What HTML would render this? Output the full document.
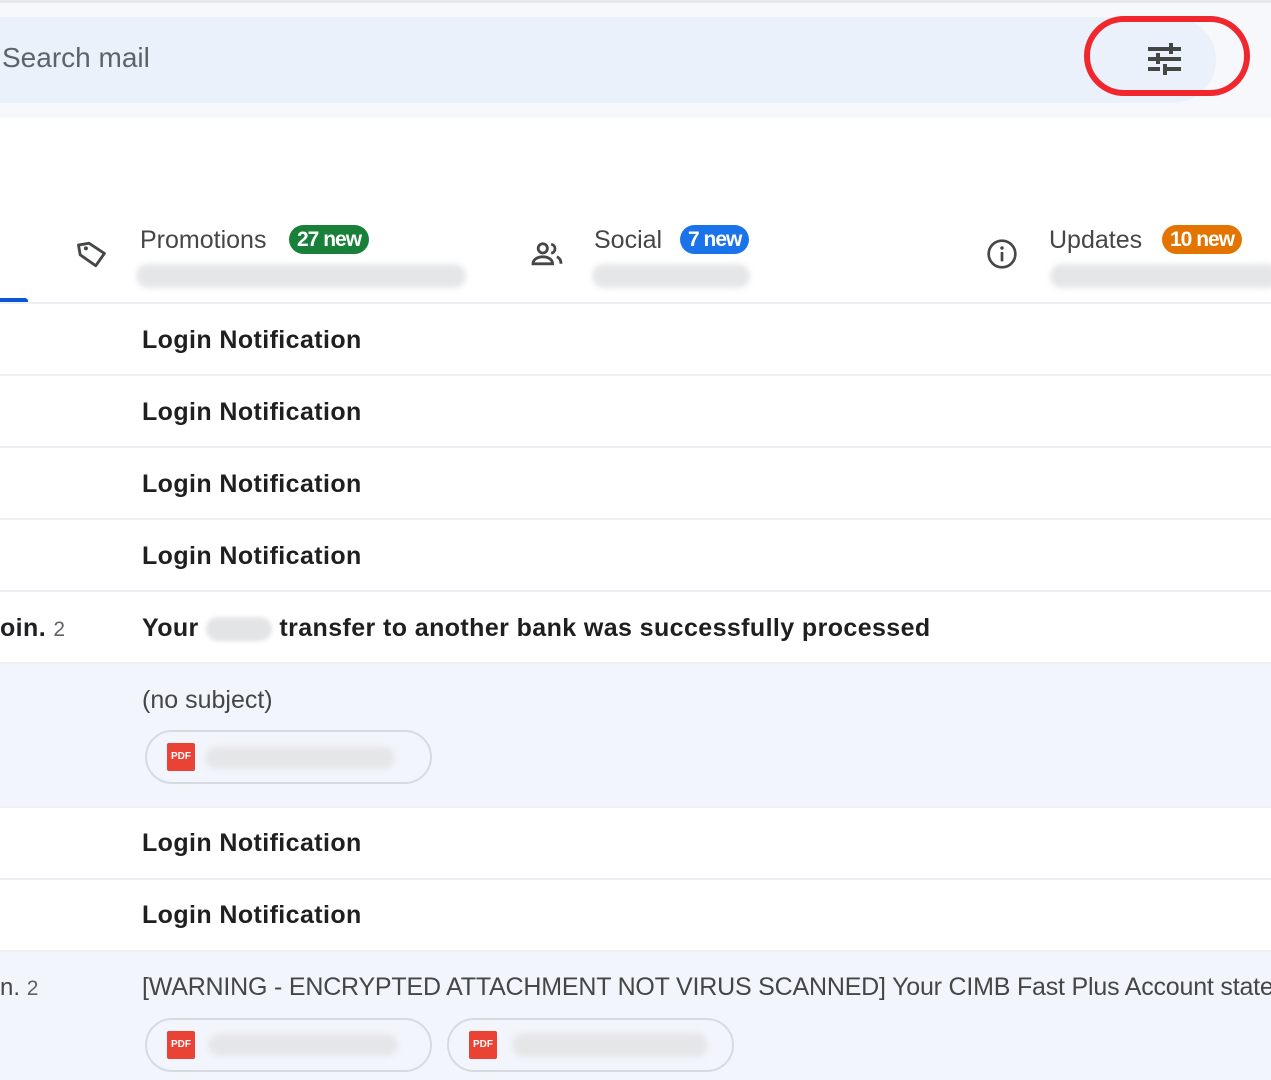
<!DOCTYPE html>
<html><head><meta charset="utf-8"><style>
*{margin:0;padding:0;box-sizing:border-box}
body{width:1271px;height:1080px;overflow:hidden;background:#fff;font-family:"Liberation Sans",Arial,sans-serif;color:#202124;position:relative}
.abs{position:absolute}
.top{left:0;top:0;width:1271px;height:118px;background:#f6f8fc;border-top:3px solid #e6e8ec}
.search{left:0;top:17px;width:1216px;height:86px;background:#eaf1fb;border-radius:0 43px 43px 0}
.stxt{left:2px;top:42px;font-size:28px;color:#5f6368}
.ring{left:1084px;top:16px;width:166px;height:80px;border:6px solid #f0282d;border-radius:40px}
.tab{font-size:25px;color:#444746;top:226px}
.badge{top:225px;height:29px;border-radius:15px;color:#fff;font-size:21px;font-weight:bold;padding:0 8px;line-height:29px;letter-spacing:-1px}
.blur{background:#e5e6e8;border-radius:12px;filter:blur(3px)}
.line{left:0;width:1271px;height:2px;background:#eceff3}
.subj{left:142px;font-size:25px;font-weight:bold;color:#1f1f1f;letter-spacing:0.4px}
.chip{height:54px;border:2px solid #d6dbe1;border-radius:27px;background:transparent}
.pdf{width:28px;height:28px;background:#ea4335;border-radius:2px;color:#fff;font-size:10px;font-weight:bold;text-align:center;line-height:28px}
</style></head><body>
<div class="abs top"></div>
<div class="abs search"></div>
<div class="abs stxt">Search mail</div>
<svg class="abs" style="left:1147px;top:42px" width="36" height="34" viewBox="0 0 36 34"><g fill="#444746"><rect x="1" y="5" width="21" height="4"/><rect x="25" y="5" width="9" height="4"/><rect x="22" y="1" width="4" height="11"/><rect x="1" y="15" width="8" height="4"/><rect x="13" y="15" width="21" height="4"/><rect x="9" y="11" width="4" height="11"/><rect x="1" y="25" width="12" height="4"/><rect x="20" y="25" width="14" height="4"/><rect x="16" y="22" width="4" height="11"/></g></svg>
<div class="abs ring"></div>

<svg class="abs" style="left:76px;top:237px" width="34" height="34" viewBox="0 0 24 24"><path d="M3 4v7l9.5 9.5 7.5-7.5L10.5 4z" fill="none" stroke="#444746" stroke-width="2" stroke-linejoin="round" transform="rotate(-10 12 12)"/><circle cx="7" cy="8" r="1.4" fill="#444746"/></svg>
<div class="abs tab" style="left:140px">Promotions</div>
<div class="abs badge" style="left:289px;background:#188038">27 new</div>
<div class="abs blur" style="left:136px;top:264px;width:330px;height:24px"></div>

<svg class="abs" style="left:530px;top:240px" width="34" height="28" viewBox="0 0 24 20"><g fill="none" stroke="#444746" stroke-width="2"><circle cx="9" cy="6" r="3.3"/><path d="M2 17c0-3 3-5 7-5s7 2 7 5z"/><path d="M15 3a3.3 3.3 0 0 1 0 6.5M19 12c2 .7 3 2.5 3 5"/></g></svg>
<div class="abs tab" style="left:594px">Social</div>
<div class="abs badge" style="left:680px;background:#1a73e8">7 new</div>
<div class="abs blur" style="left:592px;top:264px;width:158px;height:24px"></div>

<svg class="abs" style="left:986px;top:238px" width="32" height="32" viewBox="0 0 24 24"><circle cx="12" cy="12" r="10" fill="none" stroke="#444746" stroke-width="2"/><rect x="11" y="10.5" width="2" height="7" fill="#444746"/><circle cx="12" cy="7.5" r="1.3" fill="#444746"/></svg>
<div class="abs tab" style="left:1049px">Updates</div>
<div class="abs badge" style="left:1162px;background:#e37400">10 new</div>
<div class="abs blur" style="left:1050px;top:264px;width:230px;height:24px"></div>

<div class="abs" style="left:0;top:298px;width:28px;height:5px;background:#0b57d0;border-radius:0 3px 0 0"></div>
<div class="abs line" style="top:302px"></div>

<div class="abs subj" style="top:326px">Login Notification</div>
<div class="abs line" style="top:374px"></div>
<div class="abs subj" style="top:398px">Login Notification</div>
<div class="abs line" style="top:446px"></div>
<div class="abs subj" style="top:470px">Login Notification</div>
<div class="abs line" style="top:518px"></div>
<div class="abs subj" style="top:542px">Login Notification</div>
<div class="abs line" style="top:590px"></div>
<div class="abs" style="left:0;top:614px;font-size:25px;font-weight:bold;letter-spacing:0.4px">oin. <span style="font-weight:normal;font-size:21px;color:#5f6368">2</span></div>
<div class="abs subj" style="top:614px">Your <span style="display:inline-block;width:66px;height:24px;background:#e3e4e6;border-radius:12px;vertical-align:middle;filter:blur(2px)"></span> transfer to another bank was successfully processed</div>
<div class="abs" style="left:0;top:662px;width:1271px;height:145px;background:#f2f6fc"></div>
<div class="abs line" style="top:662px"></div>
<div class="abs" style="left:142px;top:686px;font-size:25px;color:#444746">(no subject)</div>
<div class="abs chip" style="left:145px;top:730px;width:287px"></div>
<div class="abs pdf" style="left:167px;top:743px">PDF</div>
<div class="abs blur" style="left:205px;top:747px;width:190px;height:22px"></div>
<div class="abs line" style="top:806px"></div>
<div class="abs subj" style="top:829px">Login Notification</div>
<div class="abs line" style="top:878px"></div>
<div class="abs subj" style="top:901px">Login Notification</div>
<div class="abs" style="left:0;top:950px;width:1271px;height:130px;background:#f2f6fc"></div>
<div class="abs line" style="top:950px"></div>
<div class="abs" style="left:0;top:974px;font-size:24px;color:#444746">n. <span style="font-size:21px;color:#5f6368">2</span></div>
<div class="abs" style="left:142px;top:973px;font-size:25px;color:#444746;white-space:nowrap;letter-spacing:-0.2px">[WARNING - ENCRYPTED ATTACHMENT NOT VIRUS SCANNED] Your CIMB Fast Plus Account statement</div>
<div class="abs chip" style="left:145px;top:1018px;width:287px"></div>
<div class="abs pdf" style="left:167px;top:1031px">PDF</div>
<div class="abs blur" style="left:208px;top:1034px;width:190px;height:22px"></div>
<div class="abs chip" style="left:447px;top:1018px;width:287px"></div>
<div class="abs pdf" style="left:469px;top:1031px">PDF</div>
<div class="abs blur" style="left:512px;top:1033px;width:196px;height:24px"></div>
</body></html>
